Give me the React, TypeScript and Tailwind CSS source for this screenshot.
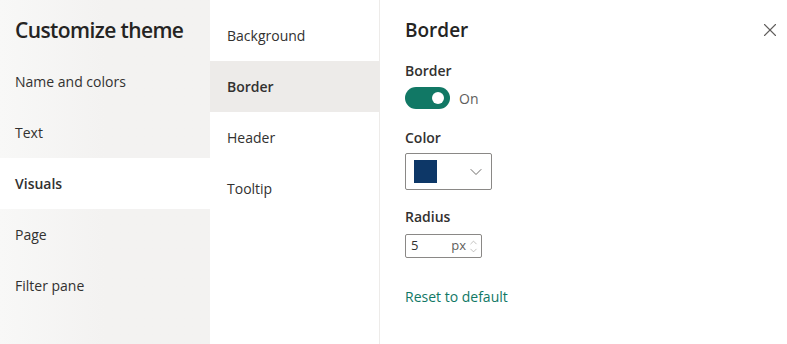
import { X, ChevronDown, ChevronUp } from "lucide-react";

const sections = ["Name and colors", "Text", "Visuals", "Page", "Filter pane"];
const subSections = ["Background", "Border", "Header", "Tooltip"];

export default function App() {
  return (
    <div
      className="flex h-[344px] w-[787px] overflow-hidden bg-white text-[#323130]"
      style={{ fontFamily: '"Open Sans", "Noto Sans", sans-serif' }}
    >
      {/* left nav */}
      <div className="flex w-[210px] shrink-0 flex-col bg-gradient-to-r from-[#f8f8f7] via-[#f3f2f1] to-[#f3f2f1]">
        <div className="flex h-[56px] items-center px-[15px] pt-[5px] text-[21px] font-semibold tracking-[-0.6px] text-[#252423]">
          Customize theme
        </div>
        {sections.map((s) => (
          <div
            key={s}
            className={
              s === "Visuals"
                ? "flex h-[51px] items-center bg-white px-[15px] text-[14px] font-semibold"
                : "flex h-[51px] items-center px-[15px] text-[14px]"
            }
          >
            {s}
          </div>
        ))}
      </div>

      {/* middle nav */}
      <div className="flex w-[170px] shrink-0 flex-col border-r border-[#edebe9] bg-white pt-[10px]">
        {subSections.map((s) => (
          <div
            key={s}
            className={
              s === "Border"
                ? "flex h-[51px] items-center bg-[#edebe9] px-[17px] text-[14px] font-semibold"
                : "flex h-[51px] items-center px-[17px] text-[14px]"
            }
          >
            {s}
          </div>
        ))}
      </div>

      {/* settings */}
      <div className="flex flex-1 flex-col pl-[25px] pr-[10px]">
        <div className="flex h-[58px] items-center justify-between pt-[2px]">
          <div className="text-[19px] font-semibold text-[#252423]">Border</div>
          <X className="-mr-[4px] h-[22px] w-[22px] text-[#605e5c]" strokeWidth={1.2} />
        </div>

        <div className="mt-[3px] text-[14px] font-semibold leading-[20px]">Border</div>
        <div className="mt-[6px] flex items-center gap-[9px]">
          <div className="flex h-[22px] w-[45px] items-center justify-end rounded-full bg-[#117865] pr-[6px]">
            <div className="h-[12px] w-[12px] rounded-full bg-white" />
          </div>
          <span className="text-[14px] text-[#605e5c]">On</span>
        </div>

        <div className="mt-[19px] text-[14px] font-semibold leading-[20px]">Color</div>
        <div className="mt-[5px] flex h-[37px] w-[87px] items-center justify-between rounded-[2px] border border-[#8a8886] pl-[8px] pr-[5px]">
          <div className="h-[23px] w-[23px] bg-[#0d3767]" />
          <ChevronDown className="h-[20px] w-[20px] text-[#605e5c]" strokeWidth={1.1} />
        </div>

        <div className="mt-[17px] text-[14px] font-semibold leading-[20px]">Radius</div>
        <div className="mt-[7px] flex h-[24px] w-[77px] items-center rounded-[2px] border border-[#8a8886] pl-[5px] pr-[2px] text-[13px]">
          <span className="flex-1">5</span>
          <span className="mr-[2px] text-[#605e5c]">px</span>
          <div className="flex flex-col text-[#a19f9d]">
            <ChevronUp className="-mb-[3px] h-[11px] w-[11px]" strokeWidth={1.4} />
            <ChevronDown className="h-[11px] w-[11px]" strokeWidth={1.4} />
          </div>
        </div>

        <div className="mt-[28px] text-[14px] text-[#117865]">Reset to default</div>
      </div>
    </div>
  );
}
